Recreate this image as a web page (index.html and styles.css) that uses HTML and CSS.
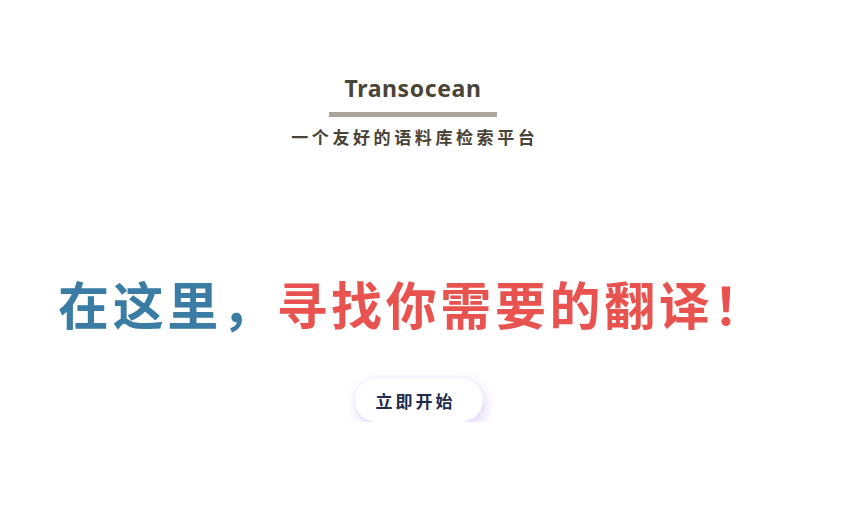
FILE: index.html
```html
<!DOCTYPE html>
<html lang="zh">
<head>
<meta charset="utf-8">
<link rel="stylesheet" href="styles.css">
</head>
<body>
<div class="page">
  <header class="brand">
    <div class="brand-name">Transocean</div>
    <div class="brand-bar"></div>
    <div class="brand-tagline">一个友好的语料库检索平台</div>
  </header>
  <main class="hero">
    <h1 class="headline"><span class="hl-blue">在这里，</span><span class="hl-red">寻找你需要的翻译！</span></h1>
    <button class="start-btn">立即开始</button>
  </main>
</div>
</body>
</html>
```

FILE: styles.css
```css
html, body {
  margin: 0;
  padding: 0;
  background: #ffffff;
}
body {
  font-family: "Noto Sans", "Noto Sans CJK SC", sans-serif;
}
.page {
  width: 826px;
  display: flex;
  flex-direction: column;
  align-items: center;
}
.brand {
  display: flex;
  flex-direction: column;
  align-items: center;
  padding-top: 72px;
}
.brand-name {
  font-family: "Noto Sans", sans-serif;
  font-weight: 700;
  font-size: 23px;
  line-height: 32px;
  letter-spacing: 0.6px;
  color: #4a4337;
}
.brand-bar {
  width: 168px;
  height: 5px;
  background: #a9a59c;
  margin-top: 8px;
}
.brand-tagline {
  margin-top: 9px;
  font-family: "Noto Sans CJK SC", sans-serif;
  font-weight: 700;
  font-size: 17px;
  line-height: 22px;
  letter-spacing: 3.6px;
  color: #4a4337;
  padding-left: 3.6px;
}
.hero {
  display: flex;
  flex-direction: column;
  align-items: center;
  padding-top: 125px;
}
.headline {
  margin: 0;
  font-family: "Noto Sans CJK SC", sans-serif;
  font-weight: 700;
  font-size: 51px;
  line-height: 60px;
  letter-spacing: 3.6px;
  white-space: nowrap;
}
.hl-blue { color: #3a7ca4; }
.hl-red { color: #e9534f; }
.start-btn {
  margin-top: 45px;
  margin-left: 12px;
  width: 128px;
  height: 44px;
  border: none;
  border-radius: 22px;
  background: #ffffff;
  box-shadow: 3px 7px 14px rgba(205, 175, 245, 0.45), 0 0 6px rgba(225, 215, 245, 0.5);
  font-family: "Noto Sans CJK SC", sans-serif;
  font-weight: 700;
  font-size: 17px;
  letter-spacing: 3px;
  color: #1f2c4c;
  padding: 0 7px 0 0;
  cursor: pointer;
}
```
